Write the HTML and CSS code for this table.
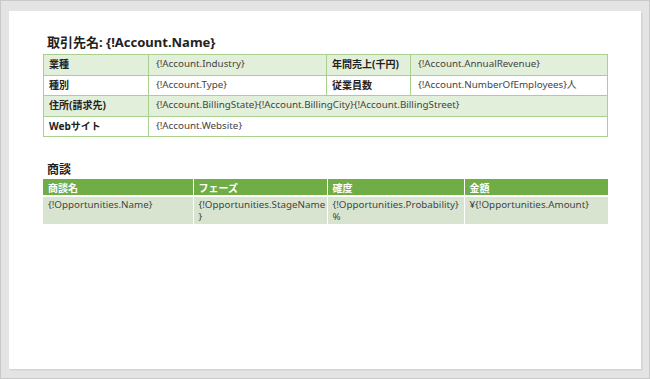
FILE: index.html
```html
<!DOCTYPE html>
<html lang="ja">
<head>
    <meta charset="UTF-8">
    <meta name="viewport" content="width=device-width, initial-scale=1.0">
    <title>取引先テンプレート</title>
    <link rel="stylesheet" href="styles.css">
</head>
<body>

    <div class="page">

        <!-- Account Section -->
        <h2 class="title">取引先名: {!Account.Name}</h2>
        <table class="account-table">
            <colgroup>
                <col style="width: 105px">
                <col style="width: 178px">
                <col style="width: 84px">
                <col>
            </colgroup>
            <tr class="band">
                <th>業種</th>
                <td>{!Account.Industry}</td>
                <th>年間売上(千円)</th>
                <td>{!Account.AnnualRevenue}</td>
            </tr>
            <tr>
                <th>種別</th>
                <td>{!Account.Type}</td>
                <th>従業員数</th>
                <td>{!Account.NumberOfEmployees}人</td>
            </tr>
            <tr class="band">
                <th>住所(請求先)</th>
                <td colspan="3">{!Account.BillingState}{!Account.BillingCity}{!Account.BillingStreet}</td>
            </tr>
            <tr>
                <th>Webサイト</th>
                <td colspan="3">{!Account.Website}</td>
            </tr>
        </table>

        <!-- Opportunities Section -->
        <h3 class="subtitle">商談</h3>
        <table class="opp-table">
            <colgroup>
                <col style="width: 150px">
                <col style="width: 134px">
                <col style="width: 137px">
                <col>
            </colgroup>
            <thead>
                <tr>
                    <th>商談名</th>
                    <th>フェーズ</th>
                    <th>確度</th>
                    <th>金額</th>
                </tr>
            </thead>
            <tbody>
                <tr>
                    <td>{!Opportunities.Name}</td>
                    <td>{!Opportunities.StageName<wbr>}</td>
                    <td>{!Opportunities.Probability}<wbr>%</td>
                    <td>¥{!Opportunities.Amount}</td>
                </tr>
            </tbody>
        </table>

    </div>

</body>
</html>
```

FILE: styles.css
```css
html, body {
    height: 100%;
}

body {
    margin: 0;
    box-sizing: border-box;
    background-color: #e4e4e4;
    border: 1px solid #c9c9c9;
    padding: 10px 8px 9px 8px;
    font-family: "Noto Sans", "Noto Sans CJK JP", sans-serif;
    color: #222;
}

.page {
    height: 100%;
    background-color: #ffffff;
    box-shadow: 1px 1px 0 #d2d2d2, 2px 2px 0 #dcdcdc;
    padding: 23px 33px 0 34px;
    box-sizing: border-box;
}

.title {
    margin: 0 0 3px 4px;
    font-size: 13px;
    font-weight: bold;
    line-height: 17px;
}

.subtitle {
    margin: 25px 0 1px 4px;
    font-size: 12px;
    font-weight: bold;
    line-height: 16px;
}

table {
    width: 100%;
    border-collapse: collapse;
    table-layout: fixed;
    font-size: 9.8px;
}

th, td {
    text-align: left;
    vertical-align: top;
    padding: 3px 5px 0 5px;
    line-height: 12px;
}

.account-table th,
.account-table td {
    border: 1px solid #a9d08e;
    height: 16.5px;
}

.account-table th {
    font-weight: bold;
    font-size: 10px;
}

.account-table td {
    color: #444;
    padding-left: 7px;
}

.account-table .band {
    background-color: #e2efda;
}

.opp-table th {
    background-color: #70ad47;
    color: #ffffff;
    font-weight: bold;
    font-size: 10px;
    height: 13px;
    border-left: 1px solid #ffffff;
    border-bottom: 2px solid #ffffff;
}

.opp-table td {
    background-color: #d8e4d0;
    color: #444;
    height: 25px;
    border-left: 1px solid #ffffff;
    padding-top: 2px;
}

.opp-table th:first-child,
.opp-table td:first-child {
    border-left: none;
}
```
